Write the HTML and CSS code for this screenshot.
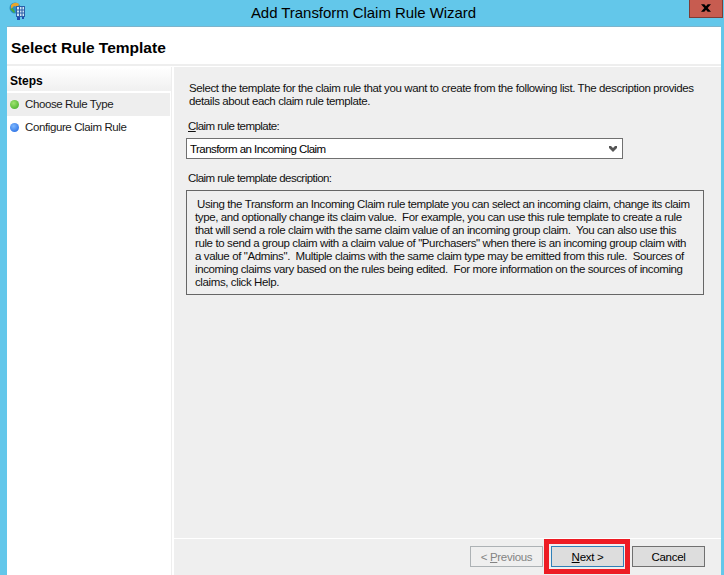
FILE: index.html
```html
<!DOCTYPE html>
<html lang="en">
<head>
<meta charset="utf-8">
<title>Add Transform Claim Rule Wizard</title>
<link rel="stylesheet" href="styles.css">
</head>
<body>
<div class="window">
  <header class="titlebar">
    <svg class="app-icon" width="18" height="18" viewBox="0 0 18 18">
      <circle cx="6" cy="6" r="5.500" fill="#2b8fc7"/>
      <path d="M2 3 Q6 -1 10 2 L9 5 L5 4 L2 7 Z" fill="#e8a52c"/>
      <path d="M1 7 L4 6 L6 10 L5 11 Z" fill="#4aa83c"/>
      <rect x="7.500" y="4.500" width="8" height="10" fill="#cfe4f3" stroke="#2a5fa8"/>
      <path d="M10.500 5 V14 M13 5 V14 M8 8 H15 M8 11 H15" stroke="#2a5fa8"/>
      <rect x="8" y="15" width="3" height="3" fill="#1f4fb0"/>
      <rect x="13" y="15" width="2" height="2" fill="#1f4fb0"/>
    </svg>
    <span class="title">Add Transform Claim Rule Wizard</span>
    <span class="close"><svg width="10" height="8" viewBox="0 0 12 9"><path d="M0 0 H4 L6 2.500 L8 0 H12 L8 4.500 L12 9 H8 L6 6.500 L4 9 H0 L4 4.500 Z" fill="#000"/></svg></span>
  </header>
  <div class="client">
    <div class="page-head"><h1>Select Rule Template</h1></div>
    <div class="body">
      <aside class="steps">
        <div class="steps-title">Steps</div>
        <div class="step current"><i class="dot green"></i>Choose Rule Type</div>
        <div class="step"><i class="dot blue"></i>Configure Claim Rule</div>
      </aside>
      <main class="pane">
        <div class="content">
          <p class="intro">Select the template for the claim rule that you want to create from the following list. The description provides
details about each claim rule template.</p>
          <label class="label"><u>C</u>laim rule template:</label>
          <div class="select">
            <span>Transform an Incoming Claim</span>
            <svg width="8" height="6" viewBox="0 0 8 6"><path d="M0 0 H2 L4 2 L6 0 H8 V2 L4 6 L0 2 Z" fill="#555"/></svg>
          </div>
          <div class="label desc-label">Claim rule template description:</div>
          <div class="desc">Using the Transform an Incoming Claim rule template you can select an incoming claim, change its claim
type, and optionally change its claim value.  For example, you can use this rule template to create a rule
that will send a role claim with the same claim value of an incoming group claim.  You can also use this
rule to send a group claim with a claim value of "Purchasers" when there is an incoming group claim with
a value of "Admins".  Multiple claims with the same claim type may be emitted from this rule.  Sources of
incoming claims vary based on the rules being edited.  For more information on the sources of incoming
claims, click Help.</div>
        </div>
        <footer class="footer">
          <button class="btn disabled">&lt; <u>P</u>revious</button>
          <button class="btn primary"><u>N</u>ext &gt;</button>
          <button class="btn">Cancel</button>
          <span class="highlight"></span>
        </footer>
      </main>
    </div>
  </div>
</div>
</body>
</html>
```
FILE: styles.css
```css
* { box-sizing: border-box; }
html, body { margin: 0; height: 100%; }
body {
  background: #63c7ea;
  font-family: "Liberation Sans", Arial, sans-serif;
  font-size: 11.500px;
  letter-spacing: -0.39px;
  color: #000;
  overflow: hidden;
}
.window { display: flex; flex-direction: column; height: 575px; padding: 0 3px 0 7px; }
.titlebar { position: relative; height: 27px; flex: none; display: flex; align-items: center; justify-content: center; border-bottom: 1px solid #7cb4cc; }
.app-icon { position: absolute; left: 2px; top: 2px; }
.title { font-size: 15px; letter-spacing: -0.05px; margin-left: -1px; padding-bottom: 2px; }
.close { position: absolute; right: -2px; top: 0; width: 34px; height: 18px; background: #c75c50; border: 1px solid #7d3c36; border-top: 0; display: flex; align-items: center; justify-content: center; padding-bottom: 2px; }
.client { flex: 1; display: flex; flex-direction: column; background: #fff; min-height: 0; }
.page-head { height: 39px; flex: none; display: flex; align-items: center; padding-left: 4px; border-bottom: 2px solid #eeeeee; }
.page-head h1 { margin: 0; font-size: 15.500px; letter-spacing: 0; font-weight: bold; position: relative; top: 2px; }
.body { flex: 1; display: flex; min-height: 0; }
.steps { width: 165px; flex: none; margin-top: 1px; border-right: 1px solid #eeeeee; }
.steps-title { height: 24px; padding: 7px 3px 0; font-size: 12px; letter-spacing: 0; font-weight: bold; background: linear-gradient(#fff, #f0f0f0); }
.step { height: 23px; margin: 0 1px 0 0; display: flex; align-items: center; padding: 0 0 2px 3px; gap: 6px; color: #1a1a1a; }
.steps-title + .step { margin-top: 2px; }
.step.current { background: #eeeeee; }
.dot { width: 9px; height: 9px; margin-top: 2px; border-radius: 50%; flex: none; }
.dot.green { background: radial-gradient(circle at 40% 35%, #9fe36f, #39a81f); }
.dot.blue { background: radial-gradient(circle at 40% 35%, #7db8ff, #1c62de); }
.pane { flex: 1; margin: 1px 0 0 2px; background: #efefef; display: flex; flex-direction: column; min-width: 0; }
.content { flex: 1; padding: 12px 0 0 12px; }
.intro { margin: 3px 0 0 3px; white-space: pre; line-height: 13px; color: #111; }
.label { display: block; margin: 11px 0 0 2px; line-height: 14px; color: #111; letter-spacing: -0.55px; }
.select { width: 437px; height: 21px; margin-top: 5px; background: #fff; border: 1px solid #707070; display: flex; align-items: center; justify-content: space-between; padding: 0 5px 0 3px; letter-spacing: -0.55px; }
.desc-label { margin-top: 12px; }
.desc { width: 518px; height: 105px; margin-top: 5px; border: 1px solid #666; padding: 7px 0 0 8px; white-space: pre; line-height: 13px; color: #111; text-indent: 2px; }
.footer { position: relative; height: 37px; flex: none; border-top: 1px solid #fff; display: flex; justify-content: flex-end; align-items: flex-start; gap: 8px; padding: 7px 16px 0 0; }
.btn { width: 73px; height: 21px; padding: 0; font: inherit; letter-spacing: -0.3px; color: #000; background: #dddddd; border: 1px solid #707070; }
.btn.primary { border-color: #3080b8; }
.btn.disabled { background: #efefef; border-color: #adb2b5; color: #838383; }
.highlight { position: absolute; left: 370px; top: 0; width: 86px; height: 35px; border: 5px solid #ed1c24; pointer-events: none; }
```
